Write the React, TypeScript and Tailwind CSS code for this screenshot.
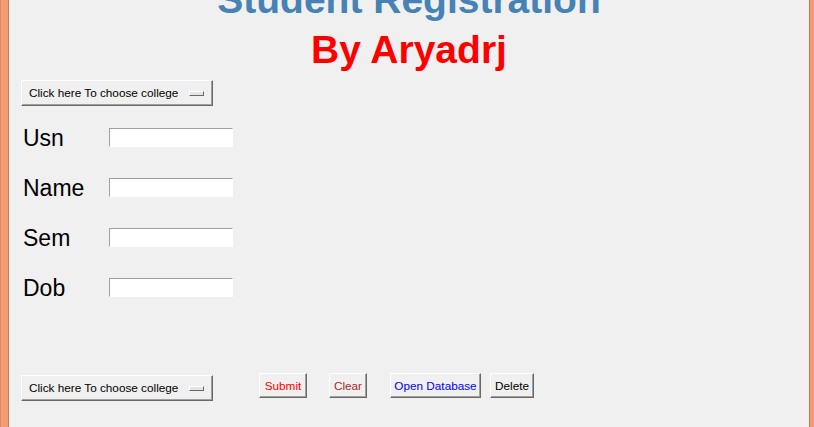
import * as React from 'react';

const ui = { fontFamily: '"Liberation Sans", Arial, sans-serif' };

function RaisedButton({ children, className = '' }: { children: React.ReactNode; className?: string }) {
  return (
    <button
      style={ui}
      className={`h-[25px] whitespace-nowrap border border-t-white border-l-white border-b-[#696969] border-r-[#696969] bg-[#f0f0f0] px-0 text-[11.75px] leading-none shadow-[inset_-1px_-1px_0_#a0a0a0] ${className}`}
    >
      {children}
    </button>
  );
}

function CollegeMenu({ className = '' }: { className?: string }) {
  return (
    <div
      style={ui}
      className={`flex h-[26px] w-[192px] items-center justify-between border border-t-white border-l-white border-b-[#696969] border-r-[#696969] bg-[#f0f0f0] pl-[7px] pr-[8px] text-[11.75px] text-black shadow-[inset_-1px_-1px_0_#a0a0a0] ${className}`}
    >
      <span className="whitespace-nowrap">Click here To choose college</span>
      <span className="h-[5px] w-[15px] border border-t-white border-l-white border-b-[#696969] border-r-[#696969] bg-[#e4e4e4]" />
    </div>
  );
}

function Field({ label }: { label: string }) {
  return (
    <div className="flex h-[19px] items-start">
      <span className="ml-[2px] h-[19px] w-[86px] text-[23px] leading-[21px] text-black">{label}</span>
      <input
        className="h-[19px] w-[124px] border border-t-[#a0a0a0] border-l-[#a0a0a0] border-b-white border-r-white bg-white outline-none"
        defaultValue=""
      />
    </div>
  );
}

export default function App() {
  return (
    <div style={ui} className="flex h-[427px] w-[814px] overflow-hidden bg-[#f29c74]">
      <div className="flex h-full w-[9px]">
        <div className="w-px bg-[#d98a66]" />
        <div className="flex-1 bg-[#f29c74]" />
        <div className="w-px bg-[#c97b57]" />
      </div>

      <div className="flex flex-1 flex-col bg-[#f0f0f0]">
        <h1 className="mt-[-20px] text-center text-[39px] font-bold leading-[39px] text-[#4682b4]">
          Student Registration
        </h1>
        <h2 className="mt-[11px] text-center text-[39px] font-bold leading-[39px] text-[#ff0000]">
          By Aryadrj
        </h2>

        <div className="flex flex-col pl-[12px]">
          <CollegeMenu className="mt-[11px]" />

          <div className="mt-[22px] flex flex-col gap-[31px]">
            <Field label="Usn" />
            <Field label="Name" />
            <Field label="Sem" />
            <Field label="Dob" />
          </div>

          <div className="mt-[76px] flex items-start">
            <CollegeMenu className="mt-[2px]" />
            <RaisedButton className="ml-[46px] w-[48px] text-[#ff0000]">Submit</RaisedButton>
            <RaisedButton className="ml-[22px] w-[38px] text-[#a52a2a]">Clear</RaisedButton>
            <RaisedButton className="ml-[23px] w-[91px] text-[#0000ff]">Open Database</RaisedButton>
            <RaisedButton className="ml-[9px] w-[44px] text-black">Delete</RaisedButton>
          </div>
        </div>
      </div>

      <div className="flex h-full w-[5px]">
        <div className="w-px bg-[#c97b57]" />
        <div className="flex-1 bg-[#f29c74]" />
      </div>
    </div>
  );
}
